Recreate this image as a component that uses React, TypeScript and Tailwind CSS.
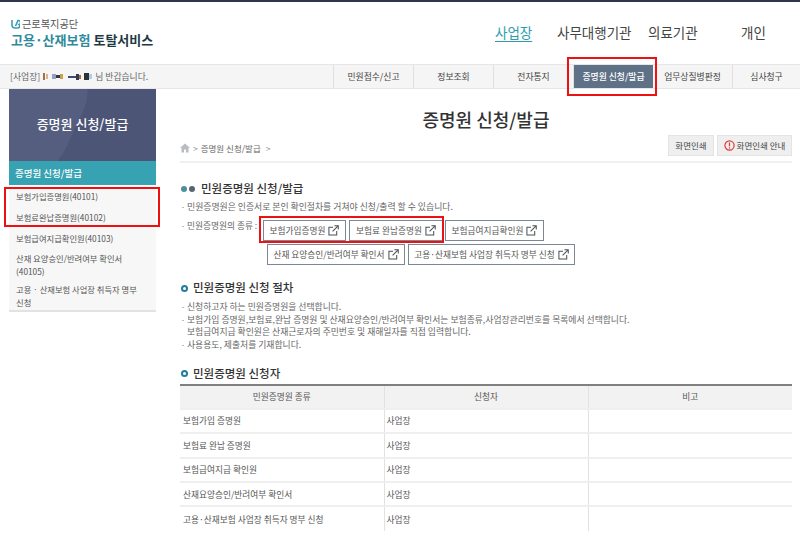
import React from "react";

const font = { fontFamily: '"Noto Sans CJK KR", "Noto Sans", sans-serif' };

function Ext() {
  return (
    <svg width="11" height="11" viewBox="0 0 12 12" fill="none" stroke="#4a4f55" strokeWidth="1.1" className="ml-[3px] shrink-0">
      <path d="M5.5 2.5H1v8.5h8.5V6.5" />
      <path d="M5 7l5.5-5.5M7 .8h4.2V5" />
    </svg>
  );
}

function Btn({ children, className }: { children: React.ReactNode; className: string }) {
  return (
    <span className={"inline-flex h-[21px] items-center justify-center border border-[#7b8794] bg-white text-[8.7px] text-[#555] " + className}>
      {children}
      <Ext />
    </span>
  );
}

function Dot() {
  return <span className="mr-[5px] inline-block size-[7px] rounded-full border-2 border-[#1f7f9c] bg-white" />;
}

function Li({ children }: { children: React.ReactNode }) {
  return (
    <p className="flex items-center">
      <span className="ml-[2px] mr-[3px] h-[1px] w-[2px] bg-[#bbb]" />
      {children}
    </p>
  );
}

const rows = ["보험가입 증명원", "보험료 완납 증명원", "보험급여지급 확인원", "산재요양승인/반려여부 확인서", "고용·산재보험 사업장 취득자 명부 신청"];
const navs = ["민원접수/신고", "정보조회", "전자통지"];

export default function App() {
  return (
    <div style={font} className="relative h-[536px] w-[800px] overflow-hidden bg-white text-[#555]">
      <div className="h-[2px] bg-[#2f3450]" />
      <header className="flex h-[62px]">
        <div className="w-[160px] pl-[11px] pt-[15px]">
          <div className="flex h-[14px] items-center text-[10.2px] leading-none text-[#555]">
            <svg width="9" height="10" viewBox="0 0 9 10" className="mr-[2px]">
              <path d="M1 1v5a3 3 0 0 0 3 3h3a2 2 0 0 0 1-3.5A2 2 0 0 0 7 1.5L4.5 7" fill="none" stroke="#3f9fb4" strokeWidth="1.6" />
            </svg>
            근로복지공단
          </div>
          <div className="text-[13px] font-bold leading-[17px] text-[#2f8b9d]">
            고용·산재보험 <span className="text-[#1f3a45]">토탈서비스</span>
          </div>
        </div>
        <nav className="flex-1 text-[13.5px] leading-none text-[#444]">
          <div className="flex h-full items-center pl-[335px]">
            <a className="w-[62px] text-[#2e9cb0] underline underline-offset-[3px]">사업장</a>
            <a className="w-[91px]">사무대행기관</a>
            <a className="w-[93px]">의료기관</a>
            <a>개인</a>
          </div>
        </nav>
      </header>
      <div className="flex h-[25px] border-y border-[#e6e6e6] bg-[#f5f5f5] text-[8.8px]">
        <div className="flex w-[333px] items-center pl-[10px] text-[#666]">
          [사업장]
          <span className="mx-[3px] flex h-[7px] w-[49px] items-center">
            <i className="h-[7px] w-[2px] bg-[#a8703f]" />
            <i className="ml-[1px] h-[5px] w-[2px] bg-[#d8b58e]" />
            <i className="ml-[4px] h-[5px] w-[4px] bg-[#8fa3c4]" />
            <i className="h-[3px] w-[4px] bg-[#33383f]" />
            <i className="h-[5px] w-[4px] bg-[#c9a24f]" />
            <i className="ml-[5px] h-[2px] w-[8px] bg-[#3f4a78]" />
            <i className="h-[6px] w-[3px] bg-[#333a58]" />
            <i className="h-[4px] w-[2px] bg-[#a8703f]" />
            <i className="ml-[3px] h-[7px] w-[6px] bg-[#2f3136]" />
            <i className="h-[5px] w-[3px] bg-[#a9d0ee]" />
          </span>
          님 반갑습니다.
        </div>
        {navs.map((n) => (
          <div key={n} className="flex w-[80px] items-center justify-center border-l border-[#e0e0e0] text-[#444]">{n}</div>
        ))}
        <div className="flex w-[80px] items-center justify-center border-l border-[#e0e0e0] bg-white">
          <div className="flex h-[23px] w-[79px] items-center justify-center bg-[#5f7186] font-medium text-white">증명원 신청/발급</div>
        </div>
        <div className="flex w-[79px] items-center justify-center text-[#444]">업무상질병판정</div>
        <div className="flex w-[68px] items-center justify-center border-l border-[#e0e0e0] text-[#444]">심사청구</div>
      </div>
      <div className="flex">
        <aside className="ml-[9px] mr-[24px] w-[147px] shrink-0">
          <div className="relative flex h-[72px] items-center justify-center overflow-hidden bg-[#4d5577] pb-[2px] text-[13px] font-medium text-white">
            <span className="absolute -left-[30px] -top-[50px] h-[140px] w-[100px] rotate-[25deg] rounded-full bg-[#565e80]" />
            <span className="relative">증명원 신청/발급</span>
          </div>
          <div className="flex h-[24px] items-center bg-[#37a2b2] pl-[6px] text-[9.5px] font-medium text-white">증명원 신청/발급</div>
          <ul className="border-b-2 border-[#e2e2e2] bg-[#f7f7f7] pb-[2px] pt-[1px] text-[8.3px] leading-[12.5px] text-[#555]">
            <li className="flex h-[21px] items-center pl-[7px]">보험가입증명원(40101)</li>
            <li className="flex h-[21px] items-center pl-[7px]">보험료완납증명원(40102)</li>
            <li className="flex h-[20px] items-center pl-[7px]">보험급여지급확인원(40103)</li>
            <li className="pb-[3px] pl-[7px] pt-[4px]">산재 요양승인/반려여부 확인서<br />(40105)</li>
            <li className="pl-[7px] pt-[3px]">고용 · 산재보험 사업장 취득자 명부<br />신청</li>
          </ul>
        </aside>
        <main className="w-[612px]">
          <h1 className="mt-[18px] text-center text-[18px] font-medium leading-[24px] text-[#333]">증명원 신청/발급</h1>
          <div className="mt-[4px] flex h-[28px] items-start justify-between border-b-2 border-[#f0f0f0]">
            <div className="mt-[7px] flex items-center text-[8.5px] text-[#666]">
              <svg width="10" height="10" viewBox="0 0 10 10" fill="#b9bcc0"><path d="M5 .5 0 5h1.5v4.5h2.5V6.5h2v3h2.5V5H10z" /></svg>
              <span className="mx-[3px] text-[#999]">&gt;</span>증명원 신청/발급<span className="ml-[5px] text-[#999]">&gt;</span>
            </div>
            <div className="flex gap-[3px] text-[8.5px] text-[#444]">
              <span className="flex h-[21px] w-[46px] items-center justify-center border border-[#e4e4e4] bg-[#efefef]">화면인쇄</span>
              <span className="flex h-[21px] w-[75px] items-center justify-center border border-[#e4e4e4] bg-[#efefef]">
                <svg width="11" height="11" viewBox="0 0 11 11" className="mr-[2px]"><circle cx="5.5" cy="5.5" r="4.6" fill="none" stroke="#e03a3a" strokeWidth="1.2" /><path d="M5.5 2.5v3.7M5.5 7.3v1.2" stroke="#e03a3a" strokeWidth="1.2" /></svg>
                화면인쇄 안내
              </span>
            </div>
          </div>
          <h2 className="mt-[18px] flex h-[16px] items-center pl-[1px] text-[11.5px] font-medium text-[#333]">
            <span className="mr-[2px] size-[6px] rounded-full bg-[#4f8f9c]" />
            <span className="mr-[6px] size-[6px] rounded-full bg-[#5a6470]" />
            민원증명원 신청/발급
          </h2>
          <div className="mt-[3px] h-[14px] text-[8.85px] leading-[14px] text-[#666]"><Li>민원증명원은 인증서로 본인 확인절차를 거쳐야 신청/출력 할 수 있습니다.</Li></div>
          <div className="mt-[5px] flex h-[46px] items-start text-[8.7px] leading-[14px] text-[#666]">
            <span className="w-[83px]"><Li>민원증명원의 종류 :</Li></span>
            <div className="w-[320px] pt-[1px]">
              <div className="flex gap-[3px]">
                <Btn className="w-[83px]">보험가입증명원</Btn>
                <Btn className="w-[94px]">보험료 완납증명원</Btn>
                <Btn className="ml-[-1px] w-[99px]">보험급여지급확인원</Btn>
              </div>
              <div className="mt-[3px] flex gap-[3px] pl-[4px]">
                <Btn className="w-[138px]">산재 요양승인/반려여부 확인서</Btn>
                <Btn className="w-[167px]">고용·산재보험 사업장 취득자 명부 신청</Btn>
              </div>
            </div>
          </div>
          <h2 className="mt-[15px] flex h-[16px] items-center pl-[1px] text-[11.5px] font-medium text-[#333]"><Dot />민원증명원 신청 절차</h2>
          <div className="mt-[5px] text-[8.82px] leading-[12.7px] text-[#666]">
            <Li>신청하고자 하는 민원증명원을 선택합니다.</Li>
            <Li>보험가입 증명원,보험료,완납 증명원 및 산재요양승인/반려여부 확인서는 보험종류,사업장관리번호를 목록에서 선택합니다.</Li>
            <p className="pl-[7px]">보험급여지급 확인원은 산재근로자의 주민번호 및 재해일자를 직접 입력합니다.</p>
            <Li>사용용도, 제출처를 기재합니다.</Li>
          </div>
          <h2 className="mt-[14px] flex h-[16px] items-center pl-[1px] text-[11.5px] font-medium text-[#333]"><Dot />민원증명원 신청자</h2>
          <table className="mt-[2px] w-full table-fixed border-t-2 border-[#808080] text-[8.7px] text-[#555]">
            <thead>
              <tr className="h-[24px] bg-[#f2f2f2] text-center">
                <th className="font-normal">민원증명원 종류</th>
                <th className="border-l border-[#e2e2e2] font-normal">신청자</th>
                <th className="border-l border-[#e2e2e2] font-normal">비고</th>
              </tr>
            </thead>
            <tbody>
              {rows.map((r) => (
                <tr key={r} className="h-[24.4px] border-t-2 border-[#efefef]">
                  <td className="pl-[3px]">{r}</td>
                  <td className="border-l border-[#e2e2e2] pl-[2px]">사업장</td>
                  <td className="border-l border-[#e2e2e2]" />
                </tr>
              ))}
            </tbody>
          </table>
        </main>
      </div>
      <div className="absolute left-[567px] top-[57px] h-[39px] w-[90px] border-2 border-[#ee1111]" />
      <div className="absolute left-[4px] top-[187px] h-[40px] w-[156px] border-2 border-[#ee1111]" />
      <div className="absolute left-[259px] top-[216px] h-[27px] w-[185px] border-2 border-[#ee1111]" />
    </div>
  );
}
